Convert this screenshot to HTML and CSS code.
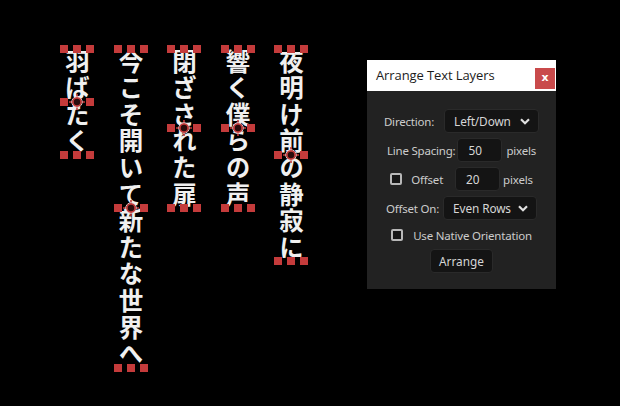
FILE: index.html
```html
<!DOCTYPE html>
<html lang="ja">
<head>
<meta charset="utf-8">
<title>Arrange Text Layers</title>
<link rel="stylesheet" href="styles.css">
</head>
<body>
<div class="stage">
  <div class="layers">
    <div class="layer">
      <span class="txt">夜明け前の静寂に</span>
      <i class="h tl"></i><i class="h tc"></i><i class="h tr"></i>
      <i class="h ml"></i><i class="h mr"></i>
      <i class="h bl"></i><i class="h bc"></i><i class="h br"></i>
      <svg class="anchor" viewBox="0 0 16 16" width="16" height="16"><path d="M0 8H16M8 0V16" stroke="#c43a3a" stroke-width="1.6"/><circle cx="8" cy="8" r="5.2" fill="none" stroke="#e8d0d0" stroke-width="1"/><circle cx="8" cy="8" r="4" fill="#2a0c0c" stroke="#c43a3a" stroke-width="1.6"/></svg>
    </div>
    <div class="layer">
      <span class="txt">響く僕らの声</span>
      <i class="h tl"></i><i class="h tc"></i><i class="h tr"></i>
      <i class="h ml"></i><i class="h mr"></i>
      <i class="h bl"></i><i class="h bc"></i><i class="h br"></i>
      <svg class="anchor" viewBox="0 0 16 16" width="16" height="16"><path d="M0 8H16M8 0V16" stroke="#c43a3a" stroke-width="1.6"/><circle cx="8" cy="8" r="5.2" fill="none" stroke="#e8d0d0" stroke-width="1"/><circle cx="8" cy="8" r="4" fill="#2a0c0c" stroke="#c43a3a" stroke-width="1.6"/></svg>
    </div>
    <div class="layer">
      <span class="txt">閉ざされた扉</span>
      <i class="h tl"></i><i class="h tc"></i><i class="h tr"></i>
      <i class="h ml"></i><i class="h mr"></i>
      <i class="h bl"></i><i class="h bc"></i><i class="h br"></i>
      <svg class="anchor" viewBox="0 0 16 16" width="16" height="16"><path d="M0 8H16M8 0V16" stroke="#c43a3a" stroke-width="1.6"/><circle cx="8" cy="8" r="5.2" fill="none" stroke="#e8d0d0" stroke-width="1"/><circle cx="8" cy="8" r="4" fill="#2a0c0c" stroke="#c43a3a" stroke-width="1.6"/></svg>
    </div>
    <div class="layer">
      <span class="txt">今こそ開いて新たな世界へ</span>
      <i class="h tl"></i><i class="h tc"></i><i class="h tr"></i>
      <i class="h ml"></i><i class="h mr"></i>
      <i class="h bl"></i><i class="h bc"></i><i class="h br"></i>
      <svg class="anchor" viewBox="0 0 16 16" width="16" height="16"><path d="M0 8H16M8 0V16" stroke="#c43a3a" stroke-width="1.6"/><circle cx="8" cy="8" r="5.2" fill="none" stroke="#e8d0d0" stroke-width="1"/><circle cx="8" cy="8" r="4" fill="#2a0c0c" stroke="#c43a3a" stroke-width="1.6"/></svg>
    </div>
    <div class="layer">
      <span class="txt">羽ばたく</span>
      <i class="h tl"></i><i class="h tc"></i><i class="h tr"></i>
      <i class="h ml"></i><i class="h mr"></i>
      <i class="h bl"></i><i class="h bc"></i><i class="h br"></i>
      <svg class="anchor" viewBox="0 0 16 16" width="16" height="16"><path d="M0 8H16M8 0V16" stroke="#c43a3a" stroke-width="1.6"/><circle cx="8" cy="8" r="5.2" fill="none" stroke="#e8d0d0" stroke-width="1"/><circle cx="8" cy="8" r="4" fill="#2a0c0c" stroke="#c43a3a" stroke-width="1.6"/></svg>
    </div>
  </div>

  <div class="panel">
    <div class="titlebar">
      <span class="title">Arrange Text Layers</span>
      <span class="close">x</span>
    </div>
    <div class="body">
      <div class="row">
        <span class="label lbl-dir">Direction:</span>
        <div class="select sel-dir"><span>Left/Down</span><svg class="chev" viewBox="0 0 10 7" width="10" height="7"><path d="M1 1.3L5 5.3L9 1.3" fill="none" stroke="#e0e0e0" stroke-width="2.2"/></svg></div>
      </div>
      <div class="row">
        <span class="label lbl-ls">Line Spacing:</span>
        <div class="input">50</div>
        <span class="label unit">pixels</span>
      </div>
      <div class="row">
        <span class="check"></span>
        <span class="label lbl-off">Offset</span>
        <div class="input in-off">20</div>
        <span class="label unit2">pixels</span>
      </div>
      <div class="row">
        <span class="label lbl-on">Offset On:</span>
        <div class="select sel-on"><span>Even Rows</span><svg class="chev" viewBox="0 0 10 7" width="10" height="7"><path d="M1 1.3L5 5.3L9 1.3" fill="none" stroke="#e0e0e0" stroke-width="2.2"/></svg></div>
      </div>
      <div class="row row-short">
        <span class="check"></span>
        <span class="label lbl-nat">Use Native Orientation</span>
      </div>
      <div class="row">
        <div class="button">Arrange</div>
      </div>
    </div>
  </div>
</div>
</body>
</html>
```

FILE: styles.css
```css
html, body {
  margin: 0;
  padding: 0;
  background: #000;
}

.stage {
  width: 620px;
  height: 406px;
  display: flex;
  align-items: flex-start;
  padding: 48.5px 0 0 64px;
  box-sizing: border-box;
}

.layers {
  display: flex;
  flex-direction: row-reverse;
  align-items: flex-start;
  gap: 27.5px;
}

.layer {
  position: relative;
  width: 26px;
}

.txt {
  display: block;
  writing-mode: vertical-rl;
  font-family: "Noto Sans CJK JP", "Noto Sans CJK SC", sans-serif;
  font-weight: 700;
  font-size: 24.5px;
  letter-spacing: 2.1px;
  line-height: 26px;
  width: 26px;
  color: #f0f0f0;
}

.h {
  position: absolute;
  width: 8px;
  height: 8px;
  margin: -4px 0 0 -4px;
  background: #c43b3b;
}
.tl { left: 0; top: 0; }
.tc { left: 50%; top: 0; }
.tr { left: 100%; top: 0; }
.ml { left: 0; top: 50%; }
.mr { left: 100%; top: 50%; }
.bl { left: 0; top: 100%; }
.bc { left: 50%; top: 100%; }
.br { left: 100%; top: 100%; }

.anchor {
  position: absolute;
  left: 50%;
  top: 50%;
  margin: -8px 0 0 -8px;
}

/* Panel */
.panel {
  width: 189px;
  height: 229px;
  margin: 11.5px 0 0 63px;
  background: #222;
  font-family: "Noto Sans", "Open Sans", sans-serif;
  display: flex;
  flex-direction: column;
}

.titlebar {
  height: 31px;
  background: #fff;
  display: flex;
  align-items: flex-start;
  justify-content: space-between;
  padding: 0 1px 0 9px;
  box-sizing: border-box;
}

.title {
  font-family: "Open Sans", "Noto Sans", sans-serif;
  font-size: 13px;
  color: #1c1c1c;
  line-height: 31px;
  letter-spacing: -0.1px;
}

.close {
  margin-top: 8px;
  width: 20px;
  height: 21px;
  background: #c94a4b;
  color: #fff;
  font-family: "DejaVu Sans", sans-serif;
  font-size: 11px;
  font-weight: 700;
  line-height: 20px;
  text-align: center;
}

.body {
  display: flex;
  flex-direction: column;
  align-items: center;
  gap: 5px;
  padding-top: 18px;
}

.row {
  display: flex;
  align-items: center;
  height: 24px;
}
.row-short {
  height: 20px;
  margin-bottom: -1px;
}

.label {
  font-size: 11.5px;
  color: #cccccc;
  letter-spacing: -0.2px;
  white-space: nowrap;
}

.lbl-dir { margin-right: 10px; }
.lbl-ls { margin-right: 2px; }
.unit { margin-left: 4px; }
.lbl-off { margin: 0 12px 0 9px; }
.unit2 { margin-left: 3px; }
.lbl-on { margin-right: 4px; }
.lbl-nat { margin-left: 10px; }

.select {
  height: 24px;
  box-sizing: border-box;
  background: #141414;
  border: 1px solid #2a2a2a;
  border-radius: 4px;
  display: flex;
  align-items: center;
  justify-content: space-between;
  padding: 0 8px 0 9px;
  font-size: 11.8px;
  color: #d6d6d6;
  letter-spacing: -0.1px;
}
.sel-dir { width: 95px; }
.sel-on { width: 94px; }

.chev { flex: none; }

.input {
  width: 45px;
  height: 24px;
  box-sizing: border-box;
  background: #141414;
  border: 1px solid #2a2a2a;
  border-radius: 4px;
  padding-left: 10px;
  font-size: 11.8px;
  line-height: 22px;
  color: #d6d6d6;
}

.check {
  width: 12px;
  height: 12px;
  box-sizing: border-box;
  border: 2px solid #b8b8b8;
  border-radius: 2px;
  background: #161616;
}

.button {
  width: 63px;
  height: 24px;
  box-sizing: border-box;
  background: #141414;
  border: 1px solid #2a2a2a;
  border-radius: 4px;
  text-align: center;
  font-size: 11.8px;
  line-height: 22px;
  color: #d6d6d6;
}
```
